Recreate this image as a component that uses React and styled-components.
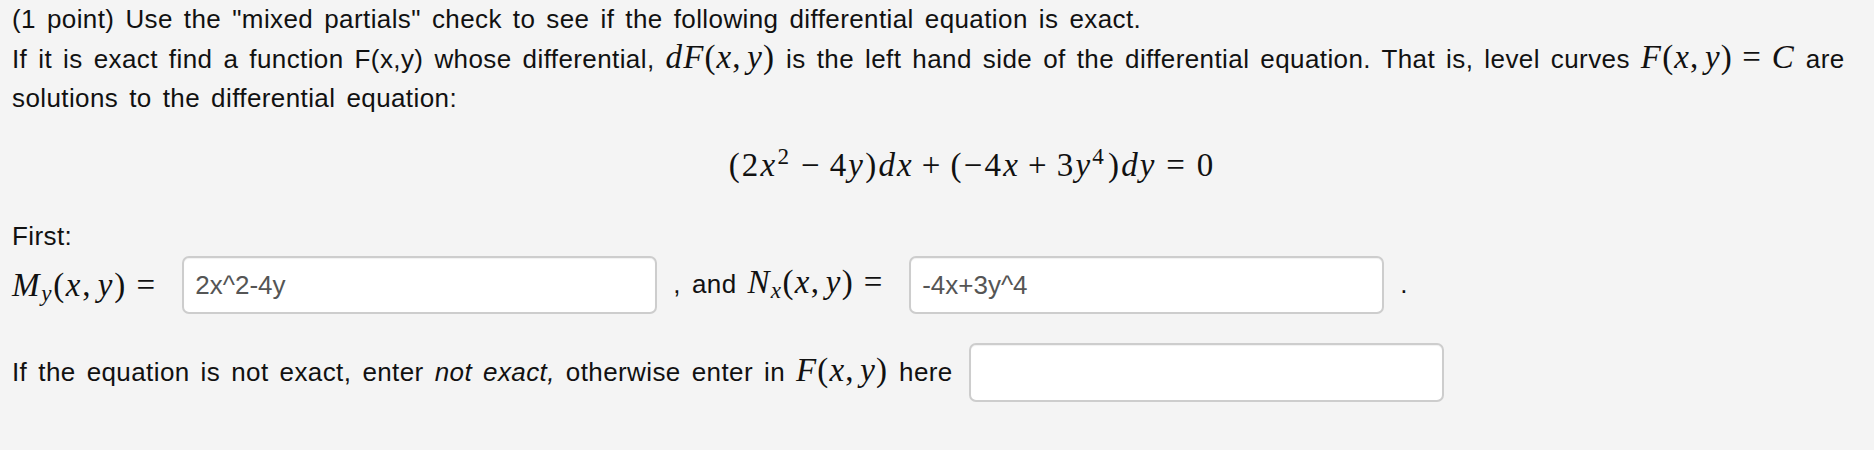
import React from "react";
import styled, { createGlobalStyle } from "styled-components";

const GlobalStyle = createGlobalStyle`
  html, body {
    margin: 0;
    padding: 0;
    background: #f4f4f4;
  }
  body {
    font-family: "Liberation Sans", Arial, Helvetica, sans-serif;
    color: #111;
  }
`;

// x, y with the thin space TeX puts after a comma
const XY = () => (
  <>
    (<V>x</V>
    <Punct>,</Punct>
    <V>y</V>)
  </>
);

const App = () => {
  return (
    <>
      <GlobalStyle />
      <Problem>
        <Text>
          (1 point) Use the "mixed partials" check to see if the following
          differential equation is exact.
          <br />
          If it is exact find a function F(x,y) whose differential,{" "}
          <Math>
            <V>dF</V>
            <XY />
          </Math>{" "}
          is the left hand side of the differential equation. That is, level
          curves{" "}
          <Math>
            <V>F</V>
            <XY />
            <Op $rel>=</Op>
            <V>C</V>
          </Math>{" "}
          are solutions to the differential equation:
        </Text>

        <Display>
          <Math $ls={2.2}>
            (2<V>x</V>
            <Sup>2</Sup>
            <Op>−</Op>4<V>y</V>)<V>dx</V>
            <Op>+</Op>(−4<V>x</V>
            <Op>+</Op>3<V>y</V>
            <Sup>4</Sup>)<V>dy</V>
            <Op $rel>=</Op>0
          </Math>
        </Display>

        <Label>First:</Label>

        <Row>
          <Math $ls={1.7}>
            <V>M</V>
            <Sub>y</Sub>
            <XY />
            <Op $rel>=</Op>
          </Math>
          <Answer value="2x^2-4y" />
          <span>
            , and{" "}
            <Math $ls={1.3}>
              <V>N</V>
              <Sub>x</Sub>
              <XY />
              <Op $rel>=</Op>
            </Math>
          </span>
          <Answer value="-4x+3y^4" />
          <span>.</span>
        </Row>

        <Row $top={29}>
          <span>
            If the equation is not exact, enter <em>not exact,</em> otherwise
            enter in{" "}
            <Math>
              <V>F</V>
              <XY />
            </Math>{" "}
            here
          </span>
          <Answer value="" $height={59} />
        </Row>
      </Problem>
    </>
  );
};

const Answer = ({ value, $height }) => (
  <Field
    type="text"
    defaultValue={value}
    spellCheck={false}
    $height={$height}
  />
);

const Problem = styled.div`
  padding: 0 12px;
  font-size: 26px;
  line-height: 39.5px;
  letter-spacing: 0.4px;
  word-spacing: 3.4px;
`;

const Text = styled.div``;

const Math = styled.span`
  font-family: "Liberation Serif", "Times New Roman", serif;
  font-size: 33px;
  line-height: 1;
  letter-spacing: ${(p) => p.$ls ?? 1.1}px;
  word-spacing: 0;
  white-space: nowrap;
`;

const V = styled.i`
  font-style: italic;
`;

const Punct = styled.span`
  margin-right: 0.17em;
`;

const Op = styled.span`
  margin: 0 ${(p) => (p.$rel ? "0.29em" : "0.24em")};
`;

const Sup = styled.sup`
  font-size: 0.7em;
  vertical-align: 0.5em;
  line-height: 0;
  margin-right: 0.08em;
`;

const Sub = styled.sub`
  font-size: 0.7em;
  font-style: italic;
  vertical-align: -0.22em;
  line-height: 0;
`;

const Display = styled.div`
  margin: 26px 0 0;
  padding-left: 70px;
  height: 44px;
  line-height: 44px;
  text-align: center;
`;

const Label = styled.div`
  margin-top: 28px;
`;

const Row = styled.div`
  display: flex;
  align-items: center;
  gap: 16px;
  margin-top: ${(p) => (p.$top ? p.$top : 0)}px;
  white-space: nowrap;
`;

const Field = styled.input`
  box-sizing: border-box;
  width: 475px;
  height: ${(p) => p.$height || 58}px;
  padding: 0 11px;
  border: 2px solid #cdcdcd;
  border-radius: 7px;
  background: #fff;
  box-shadow: inset 0 1px 1px rgba(0, 0, 0, 0.06);
  font-family: "Liberation Sans", Arial, sans-serif;
  font-size: 26px;
  color: #555;
  outline: none;
`;

export default App;
